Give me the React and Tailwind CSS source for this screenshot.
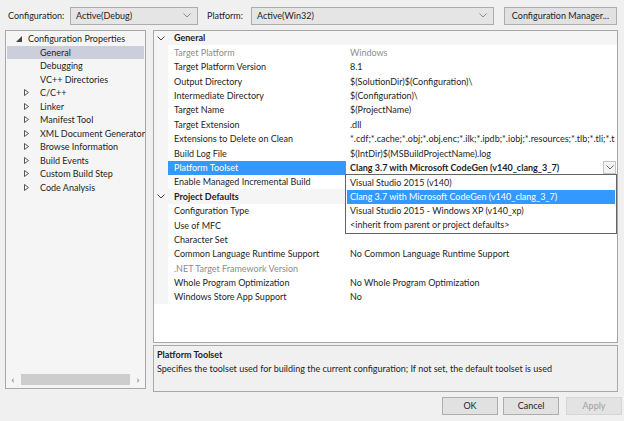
import React from 'react';

const font = { fontFamily: 'Lato, "Noto Sans", sans-serif' };

const tree = [
  { label: 'General', depth: 2, selected: true },
  { label: 'Debugging', depth: 2 },
  { label: 'VC++ Directories', depth: 2 },
  { label: 'C/C++', depth: 1 },
  { label: 'Linker', depth: 1 },
  { label: 'Manifest Tool', depth: 1 },
  { label: 'XML Document Generator', depth: 1 },
  { label: 'Browse Information', depth: 1 },
  { label: 'Build Events', depth: 1 },
  { label: 'Custom Build Step', depth: 1 },
  { label: 'Code Analysis', depth: 1 },
];

const rows = [
  { header: 'General' },
  { name: 'Target Platform', value: 'Windows', dim: true },
  { name: 'Target Platform Version', value: '8.1' },
  { name: 'Output Directory', value: '$(SolutionDir)$(Configuration)\\' },
  { name: 'Intermediate Directory', value: '$(Configuration)\\' },
  { name: 'Target Name', value: '$(ProjectName)' },
  { name: 'Target Extension', value: '.dll' },
  { name: 'Extensions to Delete on Clean', value: '*.cdf;*.cache;*.obj;*.obj.enc;*.ilk;*.ipdb;*.iobj;*.resources;*.tlb;*.tli;*.t' },
  { name: 'Build Log File', value: '$(IntDir)$(MSBuildProjectName).log' },
  { name: 'Platform Toolset', value: 'Clang 3.7 with Microsoft CodeGen (v140_clang_3_7)', selected: true },
  { name: 'Enable Managed Incremental Build', value: '' },
  { header: 'Project Defaults' },
  { name: 'Configuration Type', value: '' },
  { name: 'Use of MFC', value: '' },
  { name: 'Character Set', value: '' },
  { name: 'Common Language Runtime Support', value: 'No Common Language Runtime Support' },
  { name: '.NET Target Framework Version', value: '', dim: true },
  { name: 'Whole Program Optimization', value: 'No Whole Program Optimization' },
  { name: 'Windows Store App Support', value: 'No' },
];

const options = [
  'Visual Studio 2015 (v140)',
  'Clang 3.7 with Microsoft CodeGen (v140_clang_3_7)',
  'Visual Studio 2015 - Windows XP (v140_xp)',
  '<inherit from parent or project defaults>',
];

function Chevron({ className = '' }) {
  return (
    <svg width="8" height="5" viewBox="0 0 8 5" className={className}>
      <path d="M0.5 0.5 L4 4 L7.5 0.5" fill="none" stroke="currentColor" strokeWidth="1" />
    </svg>
  );
}

function Combo({ text, width }) {
  return (
    <div className={`flex items-center h-[18px] border border-[#acacac] bg-[#e5e5e5] px-[5px] ${width}`}>
      <span className="flex-1 text-[#1e1e1e]">{text}</span>
      <Chevron className="text-[#8a8a8a] mr-[1px]" />
    </div>
  );
}

function Btn({ children, disabled, width = 'w-[56px]' }) {
  return (
    <div className={`flex items-center justify-center h-[18px] border ${disabled ? 'border-[#d5d5d5] text-[#a0a0a0] bg-[#e3e3e3]' : 'border-[#adadad] text-[#1e1e1e] bg-[#e1e1e1]'} ${width}`}>
      {children}
    </div>
  );
}

export default function App() {
  return (
    <div className="relative w-[624px] h-[421px] bg-[#f0f0f0] text-[9px] text-[#1e1e1e] overflow-hidden" style={font}>
      {/* top bar */}
      <div className="flex items-center h-[30px] pl-[8px] pt-[1px]">
        <span className="w-[62px]">Configuration:</span>
        <Combo text="Active(Debug)" width="w-[128px]" />
        <span className="ml-[9px] w-[44px]">Platform:</span>
        <Combo text="Active(Win32)" width="w-[243px]" />
        <div className="ml-[10px]">
          <Btn width="w-[113px]">Configuration Manager...</Btn>
        </div>
      </div>

      <div className="flex h-[362px]">
        {/* tree */}
        <div className="ml-[5px] w-[141px] h-[359px] border border-[#a8a8a8] bg-[#f5f5f5] flex flex-col overflow-hidden">
          <div className="flex-1 pt-[1px]">
            <div className="flex items-center h-[13.5px] pl-[10px]">
              <svg width="6" height="6" viewBox="0 0 6 6" className="mr-[6px] shrink-0">
                <path d="M6 0 L6 6 L0 6 Z" fill="#444" />
              </svg>
              <span>Configuration Properties</span>
            </div>
            {tree.map((t) => (
              <div key={t.label} className={`flex items-center h-[13.5px] ${t.selected ? 'bg-[#cccedb] mx-[1px]' : ''}`}>
                <div className={`${t.selected ? 'w-[22px]' : 'w-[23px]'} shrink-0 flex justify-end`}>
                  {t.depth === 1 && (
                    <svg width="5" height="7" viewBox="0 0 5 7">
                      <path d="M0.5 0.5 L4.5 3.5 L0.5 6.5 Z" fill="none" stroke="#555" strokeWidth="1" />
                    </svg>
                  )}
                </div>
                <span className="ml-[11px] whitespace-nowrap">{t.label}</span>
              </div>
            ))}
          </div>
          <div className="flex items-center h-[16px] mb-[1px] text-[#606060]">
            <span className="w-[14px] text-center text-[10px]">‹</span>
            <div className="flex-1 h-[11px] bg-[#cdcdcd] mx-[1px]" />
            <span className="w-[14px] text-center text-[10px]">›</span>
          </div>
        </div>

        {/* right side */}
        <div className="ml-[7px] w-[465px] flex flex-col">
          <div className="relative h-[314px] border border-[#a8a8a8] bg-white overflow-hidden">
            {rows.map((r, i) =>
              r.header ? (
                <div key={i} className="flex items-center h-[14.4px] bg-[#f5f5f5]">
                  <div className="w-[14px] flex justify-center text-[#444]">
                    <Chevron />
                  </div>
                  <span className="ml-[6px] font-bold">{r.header}</span>
                </div>
              ) : (
                <div key={i} className="flex h-[14.4px] items-stretch">
                  <div className="w-[14px] bg-[#f5f5f5]" />
                  <div className={`w-[178px] flex items-center pl-[6px] whitespace-nowrap ${r.selected ? 'bg-[#3399ff] text-white' : r.dim ? 'text-[#8d8d8d]' : ''}`}>
                    {r.name}
                  </div>
                  <div className={`flex-1 min-w-0 flex items-center pl-[4px] whitespace-nowrap overflow-hidden ${r.selected ? 'font-bold' : ''} ${r.dim ? 'text-[#8d8d8d]' : ''}`}>
                    <span className="flex-1 overflow-hidden">{r.value}</span>
                    {r.selected && (
                      <div className="w-[13px] h-[13px] shrink-0 border border-[#c4c4c4] bg-[#f3f3f3] flex items-center justify-center mr-[1px] text-[#666]">
                        <Chevron />
                      </div>
                    )}
                  </div>
                </div>
              )
            )}

            {/* dropdown list */}
            <div className="absolute left-[191px] top-[143px] w-[272px] h-[60px] border border-[#646464] bg-white py-[1px]">
              {options.map((o, i) => (
                <div key={o} className={`flex items-center h-[14px] pl-[3px] mx-[1px] ${i === 1 ? 'bg-[#3399ff] text-white' : ''}`}>
                  {o}
                </div>
              ))}
            </div>
          </div>

          <div className="mt-[2px] h-[47px] border border-[#a8a8a8] bg-[#f0f0f0] px-[3px] pt-[2px]">
            <div className="font-bold leading-[14px]">Platform Toolset</div>
            <div className="leading-[14px]">Specifies the toolset used for building the current configuration; If not set, the default toolset is used</div>
          </div>
        </div>
      </div>

      {/* buttons */}
      <div className="flex justify-end gap-[5px] pr-[2px] mt-[5px]">
        <Btn>OK</Btn>
        <Btn>Cancel</Btn>
        <div className="ml-[2px]">
          <Btn disabled>Apply</Btn>
        </div>
      </div>
    </div>
  );
}
